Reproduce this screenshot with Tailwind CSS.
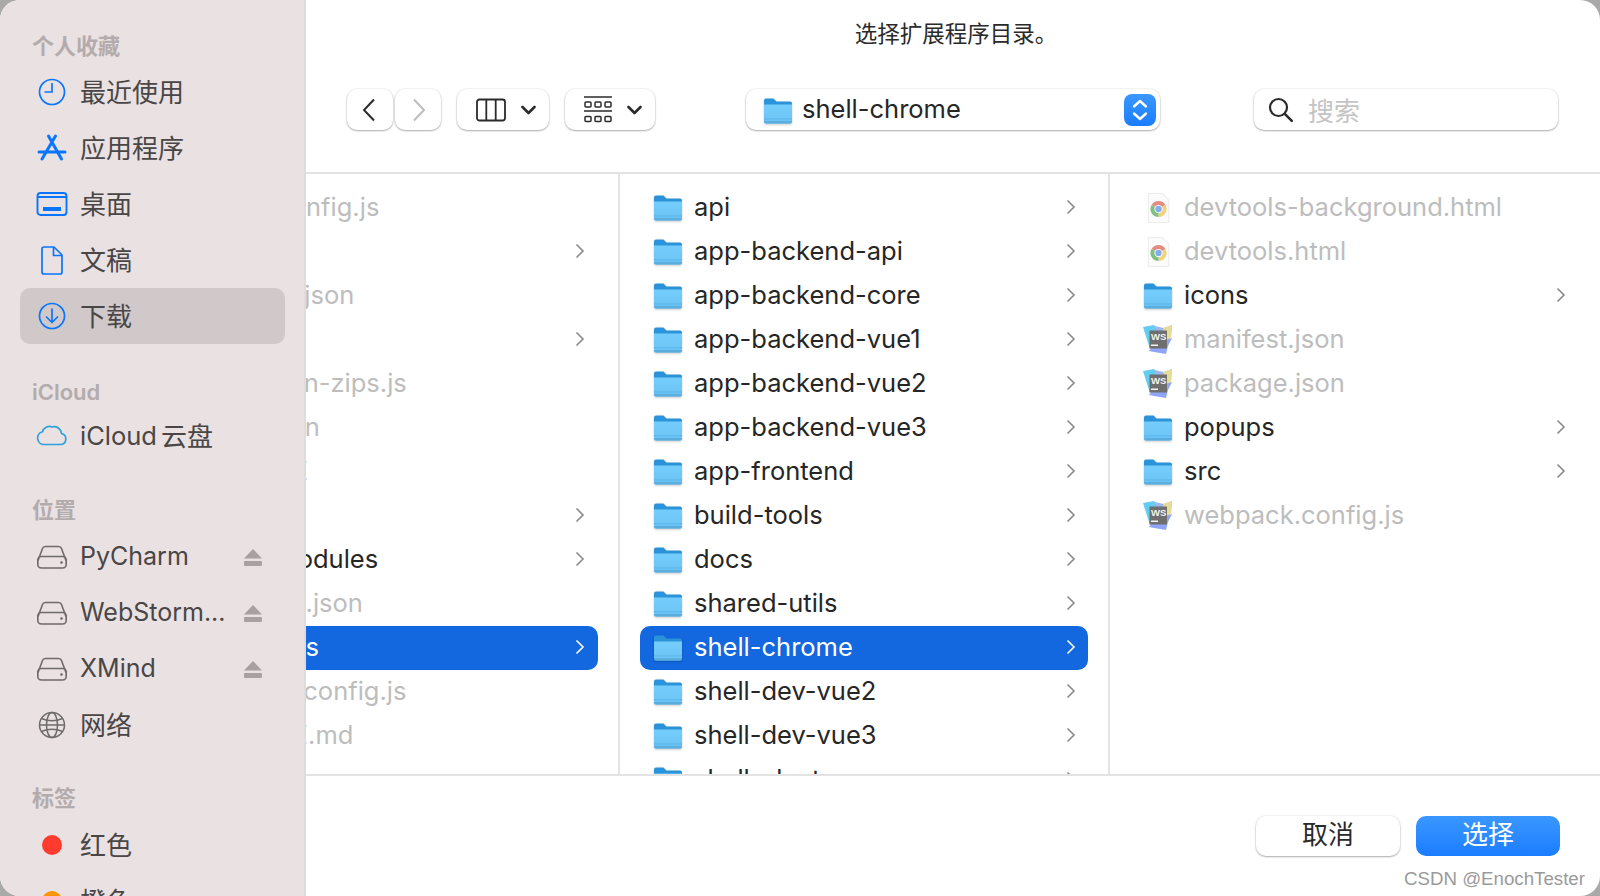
<!DOCTYPE html>
<html lang="en">
<head>
    <meta charset="UTF-8">
    <title>选择扩展程序目录</title>
    <script src="https://cdn.jsdelivr.net/npm/@tailwindcss/browser@4"></script>
</head>
<body class="bg-[#a9a9a9] font-['Inter','Noto_Sans_CJK_SC',sans-serif] overflow-hidden">
    <!-- shared icons -->
    <svg width="0" height="0" class="absolute">
        <defs>
            <linearGradient id="folderBody" x1="0" y1="0" x2="0" y2="1">
                <stop offset="0" stop-color="#74cdfb"/>
                <stop offset="1" stop-color="#6cc4f6"/>
            </linearGradient>
            <symbol id="folder" viewBox="0 0 28 26">
                <path d="M0 2.500A2 2 0 0 1 2 .5h7.500l3 3H26a2 2 0 0 1 2 2V9H0z" fill="#2b93d9"/>
                <path d="M0 6.500h28v17a2 2 0 0 1-2 2H2a2 2 0 0 1-2-2z" fill="url(#folderBody)"/>
                <path d="M0 20.500h28v1H0z" fill="#58b2e6"/>
                <path d="M0 23h28v.6a2 2 0 0 1-2 2H2a2 2 0 0 1-2-2z" fill="#5aaede"/>
            </symbol>
            <symbol id="chrome" viewBox="0 0 28 28">
                <path d="M5 .5h13l6 6v21H5z" fill="#fbfbfb" stroke="#ececec"/>
                <path d="M14.500 15 8 11.250A7.500 7.500 0 0 1 21 11.250z" fill="#e58c80"/>
                <path d="M14.500 15 21 11.250A7.500 7.500 0 0 1 14.500 22.500z" fill="#f3d37a"/>
                <path d="M14.500 15V22.500A7.500 7.500 0 0 1 8 11.250z" fill="#7fbf80"/>
                <circle cx="14.500" cy="15" r="3.900" fill="#fff"/>
                <circle cx="14.500" cy="15" r="3" fill="#85aef0"/>
            </symbol>
            <symbol id="webstorm" viewBox="0 0 30 30">
                <path d="M0 2 11 0l4 4-8 20z" fill="#62cdf2"/>
                <path d="M11 1l10 2 8-3-1 12-10 4z" fill="#9fb6ee"/>
                <path d="M20 3l9-3-1 13-4 3z" fill="#e6dd9a"/>
                <path d="M6 26l6-8 17-5-4 8-2 8-12-2z" fill="#8fa6f6"/>
                <rect x="6.500" y="5.500" width="17.500" height="18" fill="#6f6f6f"/>
                <text x="8" y="14.500" font-size="9.500" font-weight="700" font-family="Liberation Sans" fill="#f4f4f4">WS</text>
                <rect x="8" y="19.500" width="7" height="1.500" fill="#f4f4f4"/>
            </symbol>
            <symbol id="drive" viewBox="0 0 30 24">
                <path d="M1 15.500 5.500 3.500Q6.200 1.500 8.500 1.500h13q2.300 0 3 2L29 15.500" fill="none" stroke="currentColor" stroke-width="1.600"/>
                <rect x=".8" y="11.500" width="28.400" height="11.500" rx="3.500" fill="none" stroke="currentColor" stroke-width="1.600"/>
                <circle cx="24.500" cy="17.500" r="1.300" fill="currentColor"/>
            </symbol>
            <symbol id="eject" viewBox="0 0 18 17">
                <path d="M9 0 18 9.500H0z" fill="currentColor"/>
                <rect y="12" width="18" height="5" rx="1" fill="currentColor"/>
            </symbol>
        </defs>
    </svg>

    <div class="relative w-[1600px] h-[896px] bg-white rounded-[20px] overflow-hidden flex">
        <!-- Sidebar -->
        <aside class="w-[306px] h-full shrink-0 bg-[#e9e1e2] border-r-2 border-[#e0dcdc] text-[26px] text-[#4a4646] overflow-hidden">
            <div class="h-[34px] mt-[28px] mb-[2px] pl-[32px] pt-[2px] flex items-center text-[22px] font-semibold text-[#b3abac]">个人收藏</div>
            <div class="h-[56px] mx-[20px] pl-[16px] flex items-center gap-[12px]">
                <svg class="w-[32px] h-[32px] text-[#0a76ff]" viewBox="0 0 32 32" fill="none" stroke="currentColor" stroke-width="1.700"><circle cx="16" cy="16" r="12.500"/><path d="M16 7v9H8.500"/></svg>
                <span>最近使用</span>
            </div>
            <div class="h-[56px] mx-[20px] pl-[16px] flex items-center gap-[12px]">
                <svg class="w-[32px] h-[32px] text-[#0a76ff]" viewBox="0 0 32 32" fill="none" stroke="currentColor" stroke-linecap="round" stroke-width="3"><path d="M12.500 4 25.500 27M19.500 4 6 27"/><path d="M3 20h26"/></svg>
                <span>应用程序</span>
            </div>
            <div class="h-[56px] mx-[20px] pl-[16px] flex items-center gap-[12px]">
                <svg class="w-[32px] h-[32px] text-[#0a76ff]" viewBox="0 0 32 32" fill="none" stroke="currentColor" stroke-width="1.900"><rect x="1.500" y="5" width="29" height="22" rx="3"/><path d="M1.500 9h29"/><rect x="7" y="19" width="18" height="4" fill="currentColor" stroke="none"/></svg>
                <span>桌面</span>
            </div>
            <div class="h-[56px] mx-[20px] pl-[16px] flex items-center gap-[12px]">
                <svg class="w-[32px] h-[32px] text-[#0a76ff]" viewBox="0 0 32 32" fill="none" stroke="currentColor" stroke-width="1.700" stroke-linejoin="round"><path d="M6 5a2 2 0 0 1 2-2h10l8 8v17a2 2 0 0 1-2 2H8a2 2 0 0 1-2-2z"/><path d="M17.500 3v8.500H26"/></svg>
                <span>文稿</span>
            </div>
            <div class="h-[56px] ml-[20px] mr-[19px] pl-[16px] flex items-center gap-[12px] bg-[#d0c8c9] rounded-[10px]">
                <svg class="w-[32px] h-[32px] text-[#0a76ff]" viewBox="0 0 32 32" fill="none" stroke="currentColor" stroke-width="1.700" stroke-linecap="round" stroke-linejoin="round"><circle cx="16" cy="16" r="12.500"/><path d="M16 9v13M10.500 17l5.500 5.500 5.500-5.500"/></svg>
                <span>下载</span>
            </div>

            <div class="h-[33px] mt-[31px] pl-[32px] pt-[2px] flex items-center text-[22px] font-semibold text-[#b3abac]">iCloud</div>
            <div class="h-[56px] mx-[20px] pl-[16px] flex items-center gap-[12px]">
                <svg class="w-[32px] h-[32px] text-[#2ea0dc]" viewBox="0 2 32 32" fill="none" stroke="currentColor" stroke-width="1.700"><path d="M8 26.500a6.500 6.500 0 0 1-1.500-12.800 7 7 0 0 1 9.500-4.700 7.500 7.500 0 0 1 9.500 6.500 5.600 5.600 0 0 1-.5 11z" stroke-linejoin="round"/></svg>
                <span class="flex items-center gap-[4px]"><span class="text-[25.500px]">iCloud</span><span>云盘</span></span>
            </div>

            <div class="h-[34px] mt-[29px] mb-[2px] pl-[32px] flex items-center text-[22px] font-semibold text-[#b3abac]">位置</div>
            <div class="h-[56px] mx-[20px] pl-[16px] flex items-center gap-[12px]">
                <svg class="w-[30px] h-[24px] ml-[1px] mr-[1px] text-[#6f6b6b]"><use href="#drive"/></svg>
                <span class="w-[147px] text-[25px] whitespace-nowrap">PyCharm</span>
                <svg class="w-[18px] h-[17px] ml-[5px] text-[#a8a0a1]"><use href="#eject"/></svg>
            </div>
            <div class="h-[56px] mx-[20px] pl-[16px] flex items-center gap-[12px]">
                <svg class="w-[30px] h-[24px] ml-[1px] mr-[1px] text-[#6f6b6b]"><use href="#drive"/></svg>
                <span class="w-[147px] text-[25px] whitespace-nowrap">WebStorm...</span>
                <svg class="w-[18px] h-[17px] ml-[5px] text-[#a8a0a1]"><use href="#eject"/></svg>
            </div>
            <div class="h-[56px] mx-[20px] pl-[16px] flex items-center gap-[12px]">
                <svg class="w-[30px] h-[24px] ml-[1px] mr-[1px] text-[#6f6b6b]"><use href="#drive"/></svg>
                <span class="w-[147px] text-[25px] whitespace-nowrap">XMind</span>
                <svg class="w-[18px] h-[17px] ml-[5px] text-[#a8a0a1]"><use href="#eject"/></svg>
            </div>
            <div class="h-[56px] mx-[20px] pl-[16px] flex items-center gap-[12px]">
                <svg class="w-[32px] h-[32px] text-[#6f6b6b]" viewBox="0 0 32 32" fill="none" stroke="currentColor" stroke-width="1.500"><circle cx="16" cy="16" r="12.500"/><ellipse cx="16" cy="16" rx="5.500" ry="12.500"/><path d="M5.500 9.500Q16 14 26.500 9.500M3.500 16h25M5.500 22.500Q16 18 26.500 22.500"/></svg>
                <span>网络</span>
            </div>

            <div class="h-[34px] mt-[28px] mb-[2px] pl-[32px] flex items-center text-[22px] font-semibold text-[#b3abac]">标签</div>
            <div class="h-[56px] mx-[20px] pl-[16px] flex items-center gap-[12px]">
                <span class="w-[32px] flex justify-center"><span class="w-[20px] h-[20px] rounded-full bg-[#ff3b30]"></span></span>
                <span>红色</span>
            </div>
            <div class="h-[56px] mx-[20px] pl-[16px] flex items-center gap-[12px]">
                <span class="w-[32px] flex justify-center"><span class="w-[20px] h-[20px] rounded-full bg-[#ff9500]"></span></span>
                <span>橙色</span>
            </div>
        </aside>

        <!-- Main -->
        <main class="flex-1 min-w-0 flex flex-col">
            <header class="h-[174px] shrink-0 border-b-2 border-[#e3e3e3]">
                <div class="h-[68px] pl-[6px] flex items-center justify-center text-[22.500px] text-[#2a2a2a]">选择扩展程序目录。</div>
                <div class="mt-[21px] pl-[41px] flex items-start">
                    <button class="w-[46px] h-[41px] flex items-center justify-center bg-white rounded-[10px] shadow-[0_1px_2px_rgba(0,0,0,0.3),0_0_0_1px_rgba(0,0,0,0.04)]">
                        <svg class="mr-[2px]" width="14" height="24" viewBox="0 0 14 24" fill="none" stroke="#2b2b2b" stroke-width="2"><path d="M12 1.500 2 12l10 10.500"/></svg>
                    </button>
                    <button class="w-[46px] h-[41px] ml-[2px] flex items-center justify-center bg-white rounded-[10px] shadow-[0_1px_2px_rgba(0,0,0,0.3),0_0_0_1px_rgba(0,0,0,0.04)]">
                        <svg class="ml-[2px]" width="14" height="24" viewBox="0 0 14 24" fill="none" stroke="#bdbdbd" stroke-width="2"><path d="M2 1.500 12 12 2 22.500"/></svg>
                    </button>
                    <button class="w-[92px] h-[41px] ml-[16px] pl-[19px] flex items-center bg-white rounded-[10px] shadow-[0_1px_2px_rgba(0,0,0,0.3),0_0_0_1px_rgba(0,0,0,0.04)]">
                        <svg width="30" height="24" viewBox="0 0 30 24" fill="none" stroke="#2b2b2b" stroke-width="1.800"><rect x="1" y="1.500" width="28" height="21" rx="2.500"/><path d="M10.300 1.500v21M19.700 1.500v21"/></svg>
                        <svg class="ml-[15px]" width="15" height="10" viewBox="0 0 15 10" fill="none" stroke="#2b2b2b" stroke-width="2.600" stroke-linecap="round" stroke-linejoin="round"><path d="M1.500 2 7.500 8l6-6"/></svg>
                    </button>
                    <button class="w-[90px] h-[41px] ml-[16px] pl-[19px] flex items-center bg-white rounded-[10px] shadow-[0_1px_2px_rgba(0,0,0,0.3),0_0_0_1px_rgba(0,0,0,0.04)]">
                        <svg width="28" height="28" viewBox="0 0 28 28" fill="none" stroke="#2b2b2b" stroke-width="1.500"><path d="M0 1h28M0 15h28"/><rect x="1" y="6" width="6" height="5" rx="1"/><rect x="11" y="6" width="6" height="5" rx="1"/><rect x="21" y="6" width="6" height="5" rx="1"/><rect x="1" y="20.500" width="6" height="5" rx="1"/><rect x="11" y="20.500" width="6" height="5" rx="1"/><rect x="21" y="20.500" width="6" height="5" rx="1"/></svg>
                        <svg class="ml-[15px]" width="15" height="10" viewBox="0 0 15 10" fill="none" stroke="#2b2b2b" stroke-width="2.600" stroke-linecap="round" stroke-linejoin="round"><path d="M1.500 2 7.500 8l6-6"/></svg>
                    </button>
                    <div class="w-[414px] h-[41px] ml-[91px] pl-[18px] pr-[4px] flex items-center bg-white rounded-[10px] shadow-[0_1px_2px_rgba(0,0,0,0.3),0_0_0_1px_rgba(0,0,0,0.04)]">
                        <svg class="w-[28px] h-[26px] mt-[2px] drop-shadow-[0_1px_1px_rgba(0,0,0,0.2)]"><use href="#folder"/></svg>
                        <span class="ml-[10px] text-[25.500px] text-[#262626]">shell-chrome</span>
                        <span class="ml-auto w-[32px] h-[32px] flex items-center justify-center rounded-[8px] bg-gradient-to-b from-[#3a97ff] to-[#1a7dff]">
                            <svg width="18" height="24" viewBox="0 0 18 24" fill="none" stroke="#fff" stroke-width="2.400" stroke-linecap="round" stroke-linejoin="round"><path d="M3 8.500 9 3l6 5.500M3 15.500 9 21l6-5.500"/></svg>
                        </span>
                    </div>
                    <div class="w-[304px] h-[41px] ml-[94px] pl-[14px] flex items-center bg-white rounded-[10px] shadow-[0_1px_2px_rgba(0,0,0,0.3),0_0_0_1px_rgba(0,0,0,0.04)]">
                        <svg width="26" height="26" viewBox="0 0 26 26" fill="none" stroke="#2b2b2b" stroke-width="2.200" stroke-linecap="round"><circle cx="10.500" cy="10.500" r="8.500"/><path d="m16.800 16.800 7 7" stroke-width="2.600"/></svg>
                        <span class="ml-[14px] mt-[3px] text-[26px] text-[#c4c4c4]">搜索</span>
                    </div>
                </div>
            </header>

            <div class="h-[602px] shrink-0 flex border-b-2 border-[#e3e3e3] overflow-hidden text-[25.500px]">
                <div id="col1" class="w-[314px] shrink-0 pt-[12px] border-r-2 border-[#e3e3e3] overflow-hidden"></div>
                <div id="col2" class="w-[490px] shrink-0 pt-[12px] border-r-2 border-[#e3e3e3] overflow-hidden"></div>
                <div id="col3" class="flex-1 min-w-0 pt-[12px] overflow-hidden"></div>
            </div>

            <footer class="flex-1 pt-[40px] pl-[950px] flex items-start gap-[16px] text-[26px]">
                <button class="w-[144px] h-[40px] pb-[3px] flex items-center justify-center bg-white text-[#2a2a2a] rounded-[10px] shadow-[0_1px_2px_rgba(0,0,0,0.3),0_0_0_1px_rgba(0,0,0,0.04)]">取消</button>
                <button class="w-[144px] h-[40px] pb-[3px] flex items-center justify-center text-white rounded-[10px] bg-gradient-to-b from-[#3a97ff] to-[#1a7dff]">选择</button>
            </footer>
        </main>

        <!-- Watermark over the dialog -->
        <div class="absolute right-[15px] bottom-[3px] text-[18.700px] font-['Liberation_Sans',sans-serif] text-[#9a9a9a]">CSDN @EnochTester</div>
    </div>

    <script>
        // Column data: name, whether it can be opened, which icon
        const col1 = [
            { name: 'babel.config.js' },
            { name: 'dist', dir: true },
            { name: 'cypress.json' },
            { name: 'docs', dir: true },
            { name: 'extension-zips.js' },
            { name: 'lerna.json' },
            { name: 'LICENSE' },
            { name: 'media', dir: true },
            { name: 'node_modules', dir: true, dark: true },
            { name: 'package.json' },
            { name: 'packages', dir: true, selected: true },
            { name: 'postcss.config.js' },
            { name: 'README.md' },
            { name: 'release.js' }
        ];
        const col2 = ['api', 'app-backend-api', 'app-backend-core', 'app-backend-vue1', 'app-backend-vue2', 'app-backend-vue3',
            'app-frontend', 'build-tools', 'docs', 'shared-utils', 'shell-chrome', 'shell-dev-vue2', 'shell-dev-vue3', 'shell-electron'];
        const col3 = [
            { name: 'devtools-background.html', icon: 'chrome' },
            { name: 'devtools.html', icon: 'chrome' },
            { name: 'icons', icon: 'folder' },
            { name: 'manifest.json', icon: 'webstorm' },
            { name: 'package.json', icon: 'webstorm' },
            { name: 'popups', icon: 'folder' },
            { name: 'src', icon: 'folder' },
            { name: 'webpack.config.js', icon: 'webstorm' }
        ];

        const chevron = color => `<svg class="ml-auto mb-[2px] shrink-0" width="10" height="16" viewBox="0 0 10 16" fill="none" stroke="${color}" stroke-width="1.600"><path d="M1.500 1.500 8 8l-6.500 6.500"/></svg>`;

        function fileIcon(icon) {
            if (icon === 'folder') return '<svg class="w-[28px] h-[26px] shrink-0 mx-[1px] drop-shadow-[0_1px_1px_rgba(0,0,0,0.2)]"><use href="#folder"/></svg>';
            return `<svg class="w-[30px] h-[30px] shrink-0"><use href="#${icon}"/></svg>`;
        }

        // Left column is scrolled sideways, so names start before the visible edge
        document.getElementById('col1').innerHTML = col1.map(f => `
            <div class="h-[44px] w-[406px] ml-[-114px] pl-[10px] pr-[13px] flex items-center rounded-r-[10px] ${f.selected ? 'bg-[#1367df] text-white' : (f.dir ? 'text-[#262626]' : 'text-[#bdbdbd]')}">
                <span class="mb-[2px] ${f.dark ? 'text-[#262626]' : ''}">${f.name}</span>
                ${f.dir ? chevron(f.selected ? '#fff' : '#8a8a8a') : ''}
            </div>`).join('');

        document.getElementById('col2').innerHTML = col2.map(name => {
            const selected = name === 'shell-chrome';
            return `
            <div class="h-[44px] mx-[20px] pl-[14px] pr-[12px] flex items-center gap-[12px] rounded-[10px] ${selected ? 'bg-[#1367df] text-white' : 'text-[#262626]'}">
                <svg class="w-[28px] h-[26px] shrink-0 drop-shadow-[0_1px_1px_rgba(0,0,0,0.2)]"><use href="#folder"/></svg>
                <span class="mb-[2px]">${name}</span>
                ${chevron(selected ? '#fff' : '#8a8a8a')}
            </div>`;
        }).join('');

        document.getElementById('col3').innerHTML = col3.map(f => `
            <div class="h-[44px] mx-[20px] pl-[13px] pr-[14px] flex items-center gap-[11px] ${f.icon === 'folder' ? 'text-[#262626]' : 'text-[#bdbdbd]'}">
                ${fileIcon(f.icon)}
                <span class="mb-[2px]">${f.name}</span>
                ${f.icon === 'folder' ? chevron('#8a8a8a') : ''}
            </div>`).join('');
    </script>
</body>
</html>
